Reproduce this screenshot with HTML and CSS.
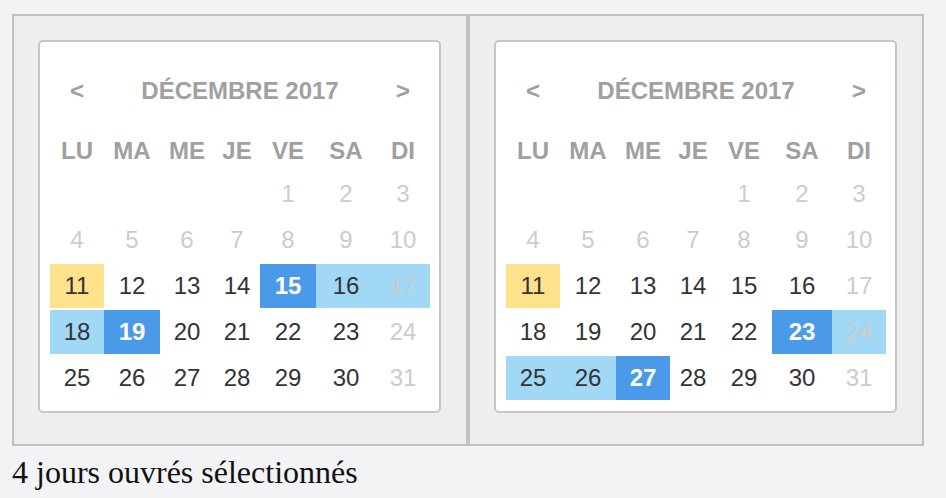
FILE: index.html
```html
<!DOCTYPE html>
<html lang="fr">
<head>
<meta charset="utf-8">
<title>Calendriers</title>
<link rel="stylesheet" href="styles.css">
</head>
<body>
<div class="panels">
  <div class="panel">
    <div class="card">
      <div class="head grid">
        <span class="nav">&lt;</span>
        <span class="title">DÉCEMBRE 2017</span>
        <span class="nav">&gt;</span>
      </div>
      <div class="weekdays grid">
        <span>LU</span><span>MA</span><span>ME</span><span>JE</span><span>VE</span><span>SA</span><span>DI</span>
      </div>
      <div class="days grid">
        <span></span><span></span><span></span><span></span><span class="off">1</span><span class="off">2</span><span class="off">3</span>
        <span class="off">4</span><span class="off">5</span><span class="off">6</span><span class="off">7</span><span class="off">8</span><span class="off">9</span><span class="off">10</span>
        <span class="today">11</span><span>12</span><span>13</span><span>14</span><span class="sel">15</span><span class="range">16</span><span class="range off">17</span>
        <span class="range">18</span><span class="sel">19</span><span>20</span><span>21</span><span>22</span><span>23</span><span class="off">24</span>
        <span>25</span><span>26</span><span>27</span><span>28</span><span>29</span><span>30</span><span class="off">31</span>
      </div>
    </div>
  </div>
  <div class="panel">
    <div class="card">
      <div class="head grid">
        <span class="nav">&lt;</span>
        <span class="title">DÉCEMBRE 2017</span>
        <span class="nav">&gt;</span>
      </div>
      <div class="weekdays grid">
        <span>LU</span><span>MA</span><span>ME</span><span>JE</span><span>VE</span><span>SA</span><span>DI</span>
      </div>
      <div class="days grid">
        <span></span><span></span><span></span><span></span><span class="off">1</span><span class="off">2</span><span class="off">3</span>
        <span class="off">4</span><span class="off">5</span><span class="off">6</span><span class="off">7</span><span class="off">8</span><span class="off">9</span><span class="off">10</span>
        <span class="today">11</span><span>12</span><span>13</span><span>14</span><span>15</span><span>16</span><span class="off">17</span>
        <span>18</span><span>19</span><span>20</span><span>21</span><span>22</span><span class="sel">23</span><span class="range off">24</span>
        <span class="range">25</span><span class="range">26</span><span class="sel">27</span><span>28</span><span>29</span><span>30</span><span class="off">31</span>
      </div>
    </div>
  </div>
</div>
<p class="summary">4 jours ouvrés sélectionnés</p>
</body>
</html>
```
FILE: styles.css
```css
html, body {
  margin: 0;
  background: #f2f3f5;
}
body {
  padding: 14px 0 0 12px;
}
.panels {
  display: flex;
}
.panel {
  box-sizing: border-box;
  width: 456px;
  height: 432px;
  padding: 24px 0 0 24px;
  background: #eeeeee;
  border: 2px solid #c2c2c2;
}
.card {
  box-sizing: border-box;
  width: 403px;
  padding: 27px 9px 11px 10px;
  background: #ffffff;
  border: 2px solid #c6c6c6;
  border-radius: 5px;
  font-family: "Liberation Sans", Arial, sans-serif;
  font-size: 24px;
}
.grid {
  display: grid;
  grid-template-columns: 54px 56px 54px 46px 56px 60px 54px;
}
.grid span {
  display: flex;
  align-items: center;
  justify-content: center;
}
.head {
  height: 44px;
  font-weight: bold;
  color: #a0a0a0;
}
.head .title {
  grid-column: 2 / 7;
}
.weekdays {
  margin-top: 18px;
  height: 40px;
  font-weight: bold;
  color: #a0a0a0;
}
.days {
  margin-top: 1px;
  grid-auto-rows: 44px;
  row-gap: 2px;
  color: #333333;
}
.days .off {
  color: #cccccc;
}
.days .today {
  background: #fde18b;
}
.days .range {
  background: #a0d8f6;
}
.days .sel {
  background: #4a9ae9;
  color: #ffffff;
  font-weight: bold;
}
.summary {
  margin: 8px 0 0 0;
  font-family: "Liberation Serif", "Times New Roman", serif;
  font-size: 32px;
  color: #111111;
}
```
